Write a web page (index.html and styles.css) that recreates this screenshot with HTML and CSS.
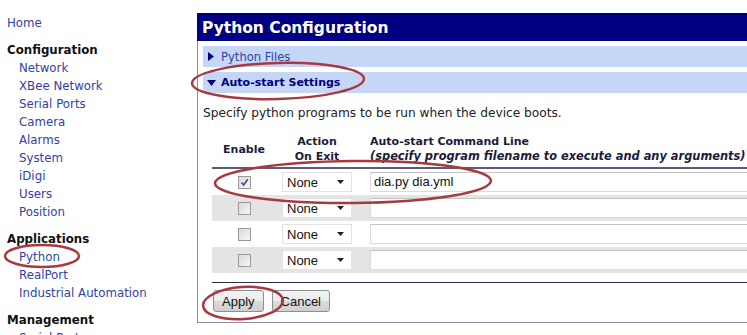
FILE: index.html
```html
<!DOCTYPE html>
<html>
<head>
    <meta charset="UTF-8">
    <title>Python Configuration</title>
    <link rel="stylesheet" href="styles.css">
</head>
<body>
    <div class="page">
        <nav class="sidebar">
            <a class="home">Home</a>

            <div class="group">
                <div class="group-title">Configuration</div>
                <a>Network</a>
                <a>XBee Network</a>
                <a>Serial Ports</a>
                <a>Camera</a>
                <a>Alarms</a>
                <a>System</a>
                <a>iDigi</a>
                <a>Users</a>
                <a>Position</a>
            </div>

            <div class="group">
                <div class="group-title">Applications</div>
                <a>Python</a>
                <a>RealPort</a>
                <a>Industrial Automation</a>
            </div>

            <div class="group">
                <div class="group-title">Management</div>
                <a>Serial Ports</a>
            </div>
        </nav>

        <div class="panel">
            <div class="panel-title">Python Configuration</div>
            <div class="panel-body">
                <div class="section-bar">
                    <svg class="tri" width="6" height="9" viewBox="0 0 6 9"><path d="M0 0 L6 4.5 L0 9 Z"/></svg>
                    <a>Python Files</a>
                </div>
                <div class="section-bar open">
                    <svg class="tri" width="9" height="6" viewBox="0 0 9 6"><path d="M0 0 L9 0 L4.5 6 Z"/></svg>
                    <span>Auto-start Settings</span>
                </div>

                <p class="hint">Specify python programs to be run when the device boots.</p>

                <div class="table-wrap">
                    <table class="autostart">
                        <thead>
                            <tr>
                                <th class="col-enable">Enable</th>
                                <th class="col-action">Action<br>On Exit</th>
                                <th class="col-cmd">Auto-start Command Line<br><em>(specify program filename to execute and any arguments)</em></th>
                            </tr>
                        </thead>
                        <tbody id="rows"></tbody>
                    </table>
                </div>

                <div class="buttons">
                    <button class="btn">Apply</button>
                    <button class="btn">Cancel</button>
                </div>
            </div>
        </div>
    </div>

    <svg class="marks" width="747" height="335" viewBox="0 0 747 335">
        <ellipse cx="278" cy="81" rx="86" ry="18" transform="rotate(-1.5 278 81)"/>
        <ellipse cx="353" cy="182" rx="138" ry="21" transform="rotate(-0.5 353 182)"/>
        <ellipse cx="42" cy="256" rx="37" ry="11"/>
        <ellipse cx="243" cy="303" rx="40" ry="16" transform="rotate(-4 243 303)"/>
    </svg>

    <script>
    const programs = [
        { enabled: true, action: 'None', command: 'dia.py dia.yml' },
        { enabled: false, action: 'None', command: '' },
        { enabled: false, action: 'None', command: '' },
        { enabled: false, action: 'None', command: '' }
    ];

    const check = '<svg width="9" height="9" viewBox="0 0 9 9"><path d="M1.5 4.5 L3.7 7 L7.8 1.2" fill="none" stroke="#3d4f86" stroke-width="1.6"/></svg>';

    const tbody = document.getElementById('rows');
    programs.forEach(p => {
        const tr = document.createElement('tr');
        tr.innerHTML = `
            <td class="col-enable"><span class="checkbox">${p.enabled ? check : ''}</span></td>
            <td class="col-action">
                <div class="select">
                    <span>${p.action}</span>
                    <svg width="7" height="4" viewBox="0 0 7 4"><path d="M0 0 L7 0 L3.5 4 Z"/></svg>
                </div>
            </td>
            <td class="col-cmd"><div class="text-input">${p.command}</div></td>
        `;
        tbody.appendChild(tr);
    });
    </script>
</body>
</html>
```

FILE: styles.css
```css
:root {
    --navy: #000080;
    --bar-color: #c6d6f6;
    --link-color: #3342a2;
    --row-gray: #e4e4e4;
    --mark-color: #a63a3f;
}

body {
    margin: 0;
    background: #ffffff;
    font-family: 'DejaVu Sans', Verdana, sans-serif;
    font-size: 11px;
    color: #222;
    overflow: hidden;
}

.page {
    display: flex;
    align-items: flex-start;
    width: 747px;
    height: 335px;
    overflow: hidden;
}

.sidebar {
    flex: 0 0 190px;
    padding: 14px 0 0 7px;
    display: flex;
    flex-direction: column;
    line-height: 18px;
    font-size: 11.8px;
}

.sidebar a {
    color: var(--link-color);
    text-decoration: none;
}

.group {
    display: flex;
    flex-direction: column;
    margin-top: 9px;
}

.group a {
    padding-left: 12px;
}

.group-title {
    font-weight: bold;
    color: #111;
}

.panel {
    flex: 0 0 620px;
    margin-top: 13px;
    border: 1px solid #8b8ba3;
    border-top: none;
}

.panel-title {
    height: 28px;
    line-height: 30px;
    background: var(--navy);
    color: #ffffff;
    font-weight: bold;
    font-size: 15.5px;
    padding-left: 5px;
    margin-left: -1px;
}

.panel-body {
    padding: 5px 5px 10px 5px;
}

.section-bar {
    height: 21px;
    margin-bottom: 5px;
    background: var(--bar-color);
    display: flex;
    align-items: center;
    gap: 7px;
    padding-left: 5px;
}

.section-bar a {
    color: var(--link-color);
    font-size: 11.6px;
}

.section-bar .tri {
    fill: var(--navy);
}

.section-bar.open {
    gap: 5px;
    padding-left: 4px;
}

.section-bar.open span {
    font-weight: bold;
    color: var(--navy);
}

.hint {
    margin: 13px 0 14px 0;
    line-height: 14px;
    font-size: 12.2px;
}

.table-wrap {
    margin-left: 9px;
    padding-bottom: 9px;
    border-bottom: 1px solid #2c2c46;
}

.autostart {
    border-collapse: collapse;
    width: 600px;
}

.autostart th {
    padding: 0 0 3px 0;
    line-height: 15px;
    color: #1c1c3a;
    border-bottom: 2px solid #5c5c78;
    vertical-align: bottom;
    white-space: nowrap;
}

.autostart th.col-enable {
    vertical-align: middle;
}

.autostart th.col-cmd {
    text-align: left;
    padding-left: 12px;
}

.autostart em {
    font-style: italic;
    font-size: 11.4px;
}

.col-enable {
    width: 64px;
    text-align: center;
}

.col-action {
    width: 82px;
}

.autostart td {
    height: 26px;
    padding: 0;
    vertical-align: middle;
}

.autostart td.col-cmd {
    padding-left: 12px;
}

.autostart tbody tr:nth-child(even) {
    background: var(--row-gray);
}

.checkbox {
    display: inline-flex;
    align-items: center;
    justify-content: center;
    width: 11px;
    height: 11px;
    border: 1px solid #9a9a9a;
    background: linear-gradient(135deg, #d9d9d9, #f7f7f7);
    vertical-align: middle;
}

.select {
    display: flex;
    align-items: center;
    justify-content: space-between;
    width: 70px;
    height: 20px;
    margin-left: 6px;
    box-sizing: border-box;
    padding: 0 7px 0 4px;
    background: #ffffff;
    border: 1px solid #e2e2e2;
    font-family: 'Liberation Sans', Arial, sans-serif;
    font-size: 13px;
    color: #111;
}

.select svg {
    fill: #222;
}

.text-input {
    height: 20px;
    box-sizing: border-box;
    padding: 0 3px;
    line-height: 18px;
    background: #ffffff;
    border: 1px solid #dcdcdc;
    border-top-color: #c4c4c4;
    font-family: 'Liberation Sans', Arial, sans-serif;
    font-size: 13px;
    color: #111;
}

.buttons {
    display: flex;
    gap: 8px;
    margin: 7px 0 0 10px;
}

.btn {
    height: 22px;
    padding: 0 8px;
    font-family: 'Liberation Sans', Arial, sans-serif;
    font-size: 13px;
    color: #111;
    border: 1px solid #8e8f8f;
    border-radius: 3px;
    background: linear-gradient(#f3f3f3, #ebebeb 50%, #dcdcdc 50%, #cfcfcf);
}

.marks {
    position: absolute;
    top: 0;
    left: 0;
    pointer-events: none;
}

.marks ellipse {
    fill: none;
    stroke: var(--mark-color);
    stroke-width: 2.5;
}
```
